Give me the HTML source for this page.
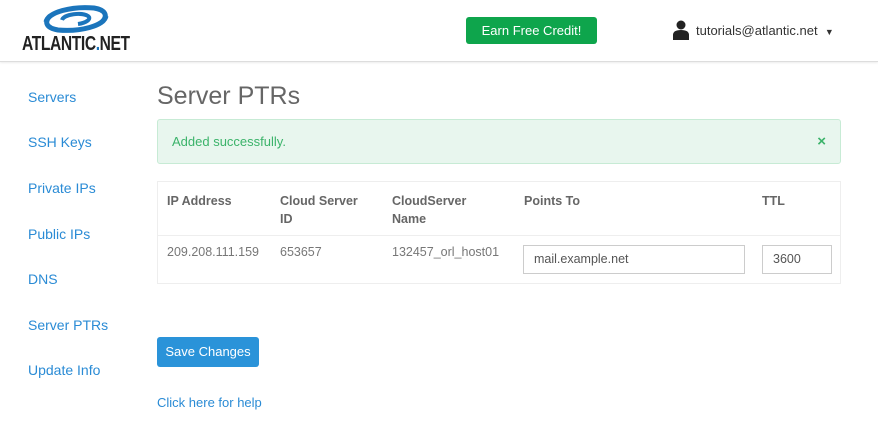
<!DOCTYPE html>
<html><head><meta charset="utf-8"><style>
*{box-sizing:border-box;margin:0;padding:0}
body{width:878px;height:424px;overflow:hidden;background:#fff;font-family:"Liberation Sans",sans-serif;color:#555;position:relative}
.hdr{position:absolute;left:0;top:0;width:878px;height:62px;border-bottom:1px solid #ddd;box-shadow:0 1px 2px rgba(0,0,0,.08)}
.logo{position:absolute;left:22px;top:33px;font-weight:bold;font-size:20px;color:#222;letter-spacing:-.5px;transform:scaleX(.78);transform-origin:left}
.logo span{color:#1b75bc}
.earn{position:absolute;left:466px;top:17px;width:131px;height:27px;background:#0ea54c;border-radius:3px;color:#fff;font-size:13px;text-align:center;line-height:27px}
.user{position:absolute;left:696px;top:23px;font-size:13px;color:#333}
.side a{position:absolute;left:28px;font-size:14px;color:#2a8bd5;text-decoration:none}
h1{position:absolute;left:157px;top:82px;font-weight:normal;font-size:25px;color:#666}
.alert{position:absolute;left:157px;top:119px;width:684px;height:45px;background:#e8f6ee;border:1px solid #c7ebd5;border-radius:3px;color:#3bb36a;font-size:13px;line-height:43px;padding-left:14px}
.alert b{position:absolute;right:14px;top:0;font-size:15px}
.tbl{position:absolute;left:157px;top:181px;width:684px;height:103px;border:1px solid #eee}
.th{position:absolute;top:10px;font-size:12.5px;font-weight:bold;color:#666;line-height:18px}
.td{position:absolute;top:63px;font-size:12.5px;color:#777}
.inp{position:absolute;border:1px solid #ccc;height:29px;font-size:12.5px;color:#555;line-height:27px;padding-left:10px}
.btn{position:absolute;left:157px;top:337px;width:102px;height:30px;background:#2a93d9;border-radius:3px;color:#fff;font-size:13px;text-align:center;line-height:30px}
.help{position:absolute;left:157px;top:395px;font-size:13px;color:#2a8bd5}
</style></head><body>
<div class="hdr">
<svg style="position:absolute;left:42px;top:4px" width="68" height="30" viewBox="0 0 68 30">
<path d="M4 18C6 8 30 2 52 4C64 6 66 12 60 18" fill="none" stroke="#1b75bc" stroke-width="5"/>
<path d="M64 12C62 22 38 28 16 26C4 24 2 18 8 12" fill="none" stroke="#1b75bc" stroke-width="5"/>
<path d="M20 16C22 10 40 8 46 12C50 15 44 19 36 20" fill="none" stroke="#1b75bc" stroke-width="4"/>
</svg>
<div class="logo">ATLANTIC<span>.</span>NET</div>
<div class="earn">Earn Free Credit!</div>
<svg style="position:absolute;left:672px;top:20px" width="18" height="20" viewBox="0 0 18 20"><circle cx="9" cy="5" r="4.5" fill="#222"/><path d="M1 20V15Q1 10 9 10Q17 10 17 15V20Z" fill="#222"/></svg>
<div class="user">tutorials@atlantic.net &nbsp;<span style="font-size:9px">▼</span></div>
</div>
<div class="side">
<a style="top:89px">Servers</a><a style="top:134px">SSH Keys</a><a style="top:180px">Private IPs</a><a style="top:226px">Public IPs</a><a style="top:271px">DNS</a><a style="top:317px">Server PTRs</a><a style="top:362px">Update Info</a>
</div>
<h1>Server PTRs</h1>
<div class="alert">Added successfully.<b>×</b></div>
<div class="tbl">
<div style="position:absolute;left:0;top:53px;width:100%;border-top:1px solid #eee"></div>
<div class="th" style="left:9px">IP Address</div>
<div class="th" style="left:122px">Cloud Server<br>ID</div>
<div class="th" style="left:234px">CloudServer<br>Name</div>
<div class="th" style="left:366px">Points To</div>
<div class="th" style="left:604px">TTL</div>
<div class="td" style="left:9px">209.208.111.159</div>
<div class="td" style="left:122px">653657</div>
<div class="td" style="left:234px">132457_orl_host01</div>
<div class="inp" style="left:365px;top:63px;width:222px">mail.example.net</div>
<div class="inp" style="left:604px;top:63px;width:70px">3600</div>
</div>
<div class="btn">Save Changes</div>
<div class="help">Click here for help</div>
</body></html>
